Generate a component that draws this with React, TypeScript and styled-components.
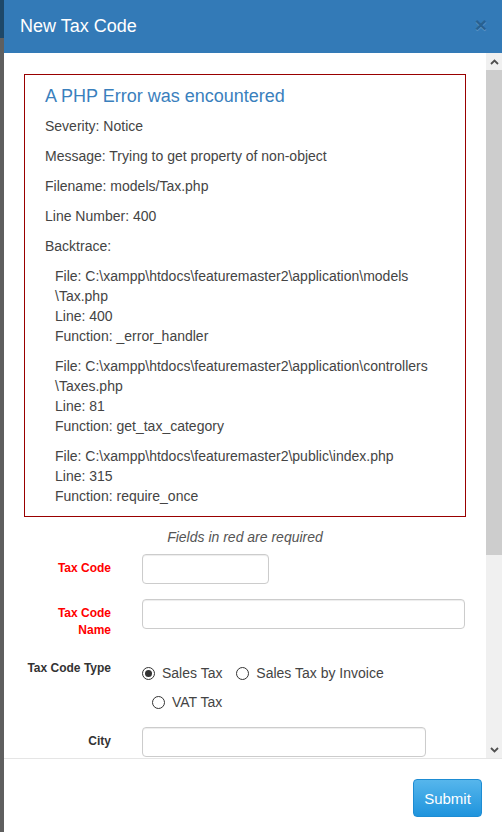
import React from "react";
import styled, { createGlobalStyle } from "styled-components";

const GlobalStyle = createGlobalStyle`
  html, body {
    margin: 0;
    padding: 0;
    background: #606060;
  }
  body {
    font-family: "Liberation Sans", Arial, sans-serif;
    font-size: 14px;
    line-height: 20px;
    color: #333;
  }
`;

const backtrace = [
  {
    file: ["C:\\xampp\\htdocs\\featuremaster2\\application\\models", "\\Tax.php"],
    line: 400,
    fn: "_error_handler",
  },
  {
    file: ["C:\\xampp\\htdocs\\featuremaster2\\application\\controllers", "\\Taxes.php"],
    line: 81,
    fn: "get_tax_category",
  },
  {
    file: ["C:\\xampp\\htdocs\\featuremaster2\\public\\index.php"],
    line: 315,
    fn: "require_once",
  },
];

const taxTypes = ["Sales Tax", "Sales Tax by Invoice", "VAT Tax"];

export default function App() {
  return (
    <>
      <GlobalStyle />
      <Screen>
        <Backdrop />
        <Modal>
          <Header>
            <Title>New Tax Code</Title>
            <Close>×</Close>
          </Header>
          <BodyFrame>
            <Content>
              <ErrorBox>
                <ErrorTitle>A PHP Error was encountered</ErrorTitle>
                <ErrorText>Severity: Notice</ErrorText>
                <ErrorText>Message: Trying to get property of non-object</ErrorText>
                <ErrorText>Filename: models/Tax.php</ErrorText>
                <ErrorText>Line Number: 400</ErrorText>
                <ErrorText>Backtrace:</ErrorText>
                {backtrace.map((b, i) => (
                  <ErrorText key={i} $indent>
                    File: {b.file[0]}
                    {b.file[1] && (
                      <>
                        <br />
                        {b.file[1]}
                      </>
                    )}
                    <br />
                    Line: {b.line}
                    <br />
                    Function: {b.fn}
                  </ErrorText>
                ))}
              </ErrorBox>

              <Hint>Fields in red are required</Hint>

              <Form>
                <Row>
                  <Label $required>Tax Code</Label>
                  <Field>
                    <Input $width={127} />
                  </Field>
                </Row>
                <Row>
                  <Label $required>
                    Tax Code
                    <br />
                    Name
                  </Label>
                  <Field>
                    <Input $width={323} />
                  </Field>
                </Row>
                <Row>
                  <Label>Tax Code Type</Label>
                  <Field>
                    <RadioGroup>
                      {taxTypes.map((t, i) => (
                        <React.Fragment key={t}>
                          {i > 0 && " "}
                          <RadioOption $first={i === 0}>
                            <RadioDot $checked={i === 0} />
                            {t}
                          </RadioOption>
                        </React.Fragment>
                      ))}
                    </RadioGroup>
                  </Field>
                </Row>
                <Row>
                  <Label>City</Label>
                  <Field>
                    <Input $width={284} />
                  </Field>
                </Row>
              </Form>
            </Content>
            <Scrollbar>
              <ScrollButton>
                <svg width="9" height="6" viewBox="0 0 9 6">
                  <path d="M1 5 L4.5 1.5 L8 5" fill="none" stroke="#505050" strokeWidth="1.8" />
                </svg>
              </ScrollButton>
              <Thumb />
              <Track />
              <ScrollButton>
                <svg width="9" height="6" viewBox="0 0 9 6">
                  <path d="M1 1 L4.5 4.5 L8 1" fill="none" stroke="#505050" strokeWidth="1.8" />
                </svg>
              </ScrollButton>
            </Scrollbar>
          </BodyFrame>
          <Footer>
            <SubmitButton>Submit</SubmitButton>
          </Footer>
        </Modal>
      </Screen>
    </>
  );
}

const Screen = styled.div`
  display: flex;
  width: 502px;
  height: 832px;
  overflow: hidden;
`;

const Backdrop = styled.div`
  width: 4px;
  flex-shrink: 0;
  background: linear-gradient(#1e4868 0, #1e4868 38px, #5f5f5f 38px, #5f5f5f 100%);
`;

const Modal = styled.div`
  flex: 1;
  display: flex;
  flex-direction: column;
  background: #fff;
  min-width: 0;
`;

const Header = styled.div`
  height: 53px;
  box-sizing: border-box;
  padding: 0 16px;
  background: #337ab7;
  display: flex;
  align-items: center;
  justify-content: space-between;
`;

const Title = styled.h4`
  margin: 0;
  font-size: 18px;
  font-weight: normal;
  color: #fff;
  line-height: 25px;
`;

const Close = styled.span`
  font-size: 21px;
  font-weight: bold;
  line-height: 1;
  color: #000;
  text-shadow: 0 1px 0 #fff;
  opacity: 0.2;
  margin-top: -4px;
  margin-right: -1px;
`;

const BodyFrame = styled.div`
  display: flex;
  height: 705px;
  overflow: hidden;
`;

const Content = styled.div`
  flex: 1;
  padding: 20px;
  overflow: hidden;
`;

const ErrorBox = styled.div`
  border: 1px solid #990000;
  padding-left: 20px;
  margin: 1px 0 10px 0;
`;

const ErrorTitle = styled.h4`
  margin: 11px 0 10px;
  font-size: 18px;
  font-weight: normal;
  line-height: 20px;
  color: #3a80bd;
`;

const ErrorText = styled.p<{ $indent?: boolean }>`
  margin: 0 0 10px ${(p) => (p.$indent ? "10px" : "0")};
  color: #444;
`;

const Hint = styled.div`
  text-align: center;
  font-style: italic;
  color: #555;
  margin-bottom: 7px;
`;

const Form = styled.div`
  display: flex;
  flex-direction: column;
  gap: 15px;
`;

const Row = styled.div`
  display: flex;
  align-items: flex-start;
`;

const Label = styled.label<{ $required?: boolean }>`
  width: 102px;
  flex-shrink: 0;
  box-sizing: border-box;
  padding: 6px 15px 0 0;
  text-align: right;
  font-size: 12px;
  font-weight: bold;
  line-height: 17px;
  white-space: nowrap;
  color: ${(p) => (p.$required ? "#ff0000" : "#333")};
`;

const Field = styled.div`
  padding-left: 16px;
  flex: 1;
`;

const Input = styled.input<{ $width: number }>`
  display: block;
  width: ${(p) => p.$width}px;
  height: 30px;
  box-sizing: border-box;
  border: 1px solid #ccc;
  border-radius: 4px;
  box-shadow: inset 0 1px 1px rgba(0, 0, 0, 0.075);
  padding: 5px 10px;
  font-family: inherit;
  font-size: 14px;
  outline: none;
`;

const RadioGroup = styled.div`
  max-width: 284px;
  font-size: 14px;
  line-height: 20px;
  color: #444;
`;

const RadioOption = styled.label<{ $first?: boolean }>`
  display: inline-flex;
  align-items: center;
  gap: 7px;
  vertical-align: top;
  margin-top: 9px;
  margin-left: ${(p) => (p.$first ? "0" : "10px")};
  white-space: nowrap;
`;

const RadioDot = styled.span<{ $checked?: boolean }>`
  width: 13px;
  height: 13px;
  box-sizing: border-box;
  border: 1px solid #333;
  border-radius: 50%;
  display: inline-flex;
  align-items: center;
  justify-content: center;
  background: #fff;

  &::after {
    content: "";
    width: 7px;
    height: 7px;
    border-radius: 50%;
    background: ${(p) => (p.$checked ? "#333" : "transparent")};
  }
`;

const Scrollbar = styled.div`
  width: 16px;
  flex-shrink: 0;
  display: flex;
  flex-direction: column;
  background: #f0f0f0;
`;

const ScrollButton = styled.div`
  height: 17px;
  flex-shrink: 0;
  display: flex;
  align-items: center;
  justify-content: center;
`;

const Thumb = styled.div`
  height: 485px;
  flex-shrink: 0;
  background: #cdcdcd;
`;

const Track = styled.div`
  flex: 1;
`;

const Footer = styled.div`
  flex: 1;
  border-top: 1px solid #e5e5e5;
  padding: 20px 20px 0 0;
  display: flex;
  justify-content: flex-end;
  align-items: flex-start;
`;

const SubmitButton = styled.button`
  width: 69px;
  height: 38px;
  border: 1px solid #1d8cd3;
  border-radius: 4px;
  background: linear-gradient(#56b6ec, #1f94dd);
  color: #fff;
  font-family: inherit;
  font-size: 15px;
  padding: 0;
  cursor: pointer;
`;
